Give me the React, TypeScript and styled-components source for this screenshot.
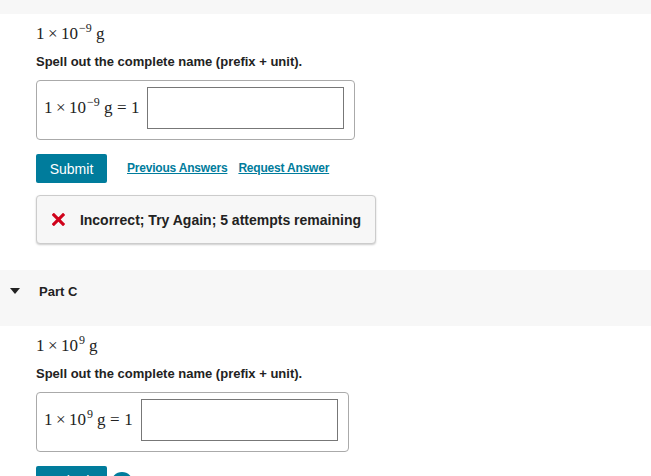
import React from "react";
import styled, { createGlobalStyle } from "styled-components";

const GlobalStyle = createGlobalStyle`
  html, body {
    margin: 0;
    padding: 0;
    background: #ffffff;
  }
  body {
    font-family: "Liberation Sans", Arial, sans-serif;
    color: #222;
  }
`;

type Part = {
  exp: string;
  answered: boolean;
};

const parts: Part[] = [
  { exp: "−9", answered: true },
  { exp: "9", answered: false },
];

const MathExpr = ({ exp, equation }: { exp: string; equation?: boolean }) => (
  <MathText>
    <Mn>1</Mn>
    <Op>×</Op>
    <Mn>10</Mn>
    <Sup>{exp}</Sup>
    <Unit>g</Unit>
    {equation && (
      <>
        <Rel>=</Rel>
        <Mn>1</Mn>
      </>
    )}
  </MathText>
);

const CrossIcon = () => (
  <svg width="14" height="13" viewBox="0 0 14 13" aria-hidden>
    <path
      d="M2 1.5 L12 11.5 M12 1.5 L2 11.5"
      stroke="#d0021b"
      strokeWidth="3.4"
      strokeLinecap="square"
    />
  </svg>
);

const PartBlock = ({ part }: { part: Part }) => (
  <PartBody>
    <MathLine>
      <MathExpr exp={part.exp} />
    </MathLine>
    <Prompt>Spell out the complete name (prefix + unit).</Prompt>
    <AnswerBox>
      <MathExpr exp={part.exp} equation />
      <AnswerInput type="text" aria-label="answer" />
    </AnswerBox>
    <ActionRow>
      <SubmitBtn type="button">Submit</SubmitBtn>
      {part.answered ? (
        <Links>
          <LinkBtn href="#">Previous Answers</LinkBtn>
          <LinkBtn href="#">Request Answer</LinkBtn>
        </Links>
      ) : (
        <HintDot />
      )}
    </ActionRow>
    {part.answered && (
      <Feedback>
        <CrossIcon />
        <FeedbackText>Incorrect; Try Again; 5 attempts remaining</FeedbackText>
      </Feedback>
    )}
  </PartBody>
);

export default function App() {
  return (
    <>
      <GlobalStyle />
      <Page>
        <TopBand />
        <PartBlock part={parts[0]} />
        <PartHeader>
          <Caret />
          <PartTitle>Part C</PartTitle>
        </PartHeader>
        <PartBlock part={parts[1]} />
      </Page>
    </>
  );
}

const Page = styled.main`
  width: 651px;
  height: 476px;
  overflow: hidden;
`;

const TopBand = styled.div`
  height: 14px;
  background: #f7f7f7;
`;

const PartBody = styled.section`
  padding: 10px 0 0 36px;
  display: flex;
  flex-direction: column;
  align-items: flex-start;
`;

const MathLine = styled.div`
  height: 20px;
  line-height: 20px;
`;

const MathText = styled.span`
  font-family: "Liberation Serif", "Times New Roman", serif;
  font-size: 17px;
  color: #222;
  white-space: nowrap;
`;

const Mn = styled.span``;

const Op = styled.span`
  margin: 0 3.5px;
`;

const Sup = styled.span`
  font-size: 12px;
  position: relative;
  top: -7px;
  margin-left: 1px;
`;

const Unit = styled.span`
  margin-left: 4px;
`;

const Rel = styled.span`
  margin: 0 4.5px;
`;

const Prompt = styled.p`
  margin: 10px 0 0;
  font-size: 13px;
  line-height: 16px;
  font-weight: bold;
  color: #222;
`;

const AnswerBox = styled.div`
  margin-top: 10px;
  display: inline-flex;
  align-items: center;
  gap: 8px;
  padding: 6px 10px 10px 7px;
  border: 1px solid #aaa;
  border-radius: 4px;
  line-height: 20px;
`;

const AnswerInput = styled.input`
  box-sizing: border-box;
  width: 197px;
  height: 42px;
  border: 1px solid #777;
  margin: 0;
  padding: 0 6px;
  font-size: 14px;
  background: #fff;
`;

const ActionRow = styled.div`
  margin-top: 14px;
  display: flex;
  align-items: center;
  gap: 20px;
`;

const SubmitBtn = styled.button`
  box-sizing: border-box;
  width: 71px;
  height: 29px;
  border: none;
  border-radius: 2px;
  background: #007c9c;
  color: #fff;
  font-family: "Liberation Sans", Arial, sans-serif;
  font-size: 14px;
  padding: 0;
  cursor: pointer;
`;

const Links = styled.div`
  display: flex;
  gap: 11px;
  margin-top: -2px;
`;

const LinkBtn = styled.a`
  color: #007c9c;
  font-size: 12px;
  font-weight: bold;
  letter-spacing: -0.2px;
  text-decoration: underline;
`;

const HintDot = styled.span`
  width: 22px;
  height: 22px;
  border-radius: 50%;
  background: #007c9c;
  margin: 4px 0 0 -16px;
`;

const Feedback = styled.div`
  margin-top: 12px;
  box-sizing: border-box;
  width: 340px;
  height: 49px;
  display: flex;
  align-items: center;
  gap: 15px;
  padding: 0 14px 0 15px;
  background: #f7f7f7;
  border: 1px solid #ccc;
  border-radius: 4px;
  box-shadow: 0 1px 2px rgba(0, 0, 0, 0.2);
`;

const FeedbackText = styled.span`
  font-size: 14px;
  font-weight: bold;
  color: #222;
  white-space: nowrap;
`;

const PartHeader = styled.div`
  margin-top: 26px;
  box-sizing: border-box;
  height: 56px;
  display: flex;
  align-items: center;
  align-self: stretch;
  padding: 0 0 14px 10px;
  gap: 19px;
  background: #f7f7f7;
`;

const Caret = styled.span`
  width: 0;
  height: 0;
  border-left: 5px solid transparent;
  border-right: 5px solid transparent;
  border-top: 6px solid #222;
`;

const PartTitle = styled.span`
  font-size: 13px;
  font-weight: bold;
  color: #222;
`;
